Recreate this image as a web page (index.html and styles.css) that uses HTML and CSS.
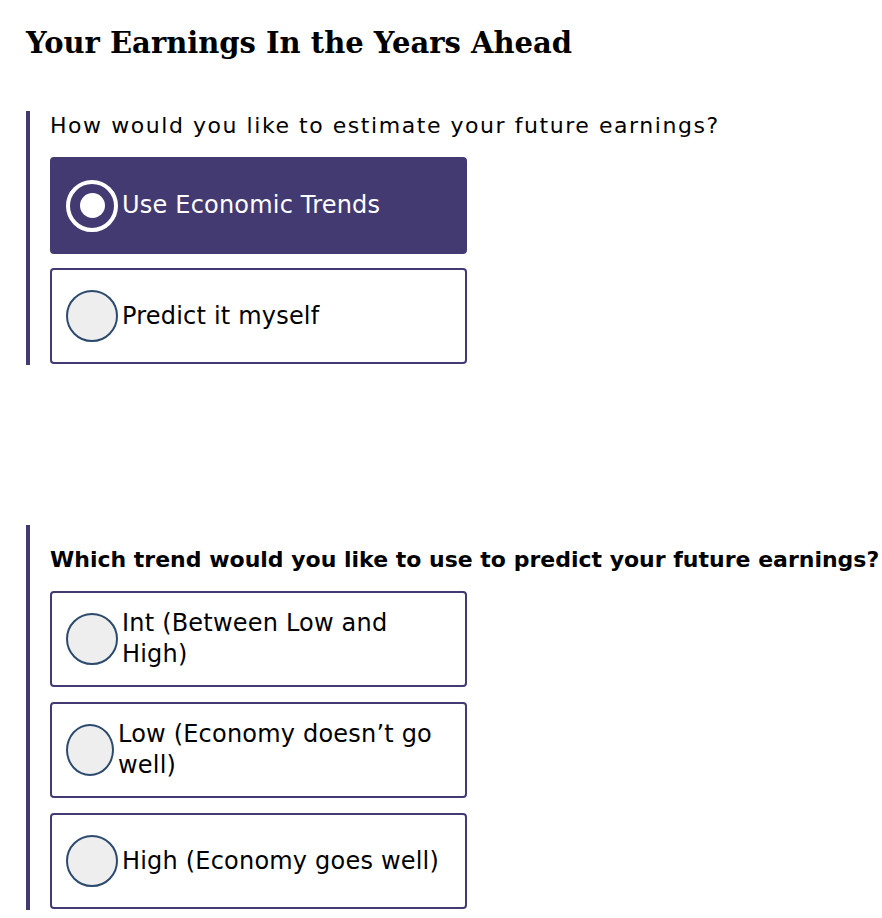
FILE: index.html
```html
<!DOCTYPE html>
<html lang="en">
<head>
<meta charset="utf-8">
<title>Your Earnings In the Years Ahead</title>
<link rel="stylesheet" href="styles.css">
</head>
<body>
<main class="page">
  <h1 class="title">Your Earnings In the Years Ahead</h1>

  <section class="question">
    <h2 class="question-label">How would you like to estimate your future earnings?</h2>
    <div class="options options--tight">
      <label class="option option--selected">
        <span class="radio"></span>
        <span class="option-text">Use Economic Trends</span>
      </label>
      <label class="option">
        <span class="radio"></span>
        <span class="option-text">Predict it myself</span>
      </label>
    </div>
  </section>

  <section class="question question--second">
    <h2 class="question-label question-label--strong">Which trend would you like to use to predict your future earnings?</h2>
    <div class="options">
      <label class="option">
        <span class="radio"></span>
        <span class="option-text">Int (Between Low and High)</span>
      </label>
      <label class="option">
        <span class="radio radio--squeezed"></span>
        <span class="option-text">Low (Economy doesn’t go well)</span>
      </label>
      <label class="option">
        <span class="radio"></span>
        <span class="option-text">High (Economy goes well)</span>
      </label>
    </div>
  </section>
</main>
</body>
</html>
```

FILE: styles.css
```css
* { box-sizing: border-box; }

html, body {
  margin: 0;
  padding: 0;
  background: #ffffff;
}

body {
  font-family: "DejaVu Sans", "Noto Sans", sans-serif;
  color: #000000;
}

.page {
  padding: 23px 0 0 26px;
}

.title {
  margin: 0 0 48px 0;
  font-family: "DejaVu Serif", "Liberation Serif", serif;
  font-weight: bold;
  font-size: 29px;
  line-height: 40px;
  color: #000000;
}

.question {
  border-left: 4px solid #443a72;
  padding: 0 0 1px 20px;
}

.question--second {
  margin-top: 160px;
  padding-top: 20px;
}

.question-label {
  margin: 0;
  font-size: 22px;
  font-weight: 500;
  letter-spacing: 1.55px;
  line-height: 30px;
  white-space: nowrap;
  color: #000000;
}

.question-label--strong {
  font-weight: 600;
  letter-spacing: 0;
}

.options {
  display: flex;
  flex-direction: column;
  gap: 15px;
  margin-top: 16px;
}

.options--tight {
  gap: 14px;
}

.option {
  display: flex;
  align-items: center;
  gap: 4px;
  width: 417px;
  height: 96px;
  padding: 0 14px;
  border: 2px solid #433a73;
  border-radius: 4px;
  background: #ffffff;
  font-size: 24px;
  letter-spacing: 0.2px;
  line-height: 31px;
  color: #000000;
}

.option--selected {
  height: 97px;
  background: #443a72;
  border-color: #443a72;
  color: #ffffff;
}

.radio {
  flex: 0 0 52px;
  width: 52px;
  height: 52px;
  border: 2px solid #2c4a6e;
  border-radius: 50%;
  background: #eeeeee;
  display: flex;
  align-items: center;
  justify-content: center;
}

.radio--squeezed {
  flex-basis: 48px;
  width: 48px;
}

.option--selected .radio {
  border: 4px solid #ffffff;
  background: transparent;
}

.option--selected .radio::after {
  content: "";
  width: 25px;
  height: 25px;
  border-radius: 50%;
  background: #ffffff;
}

.option-text {
  flex: 1 1 auto;
}
```
